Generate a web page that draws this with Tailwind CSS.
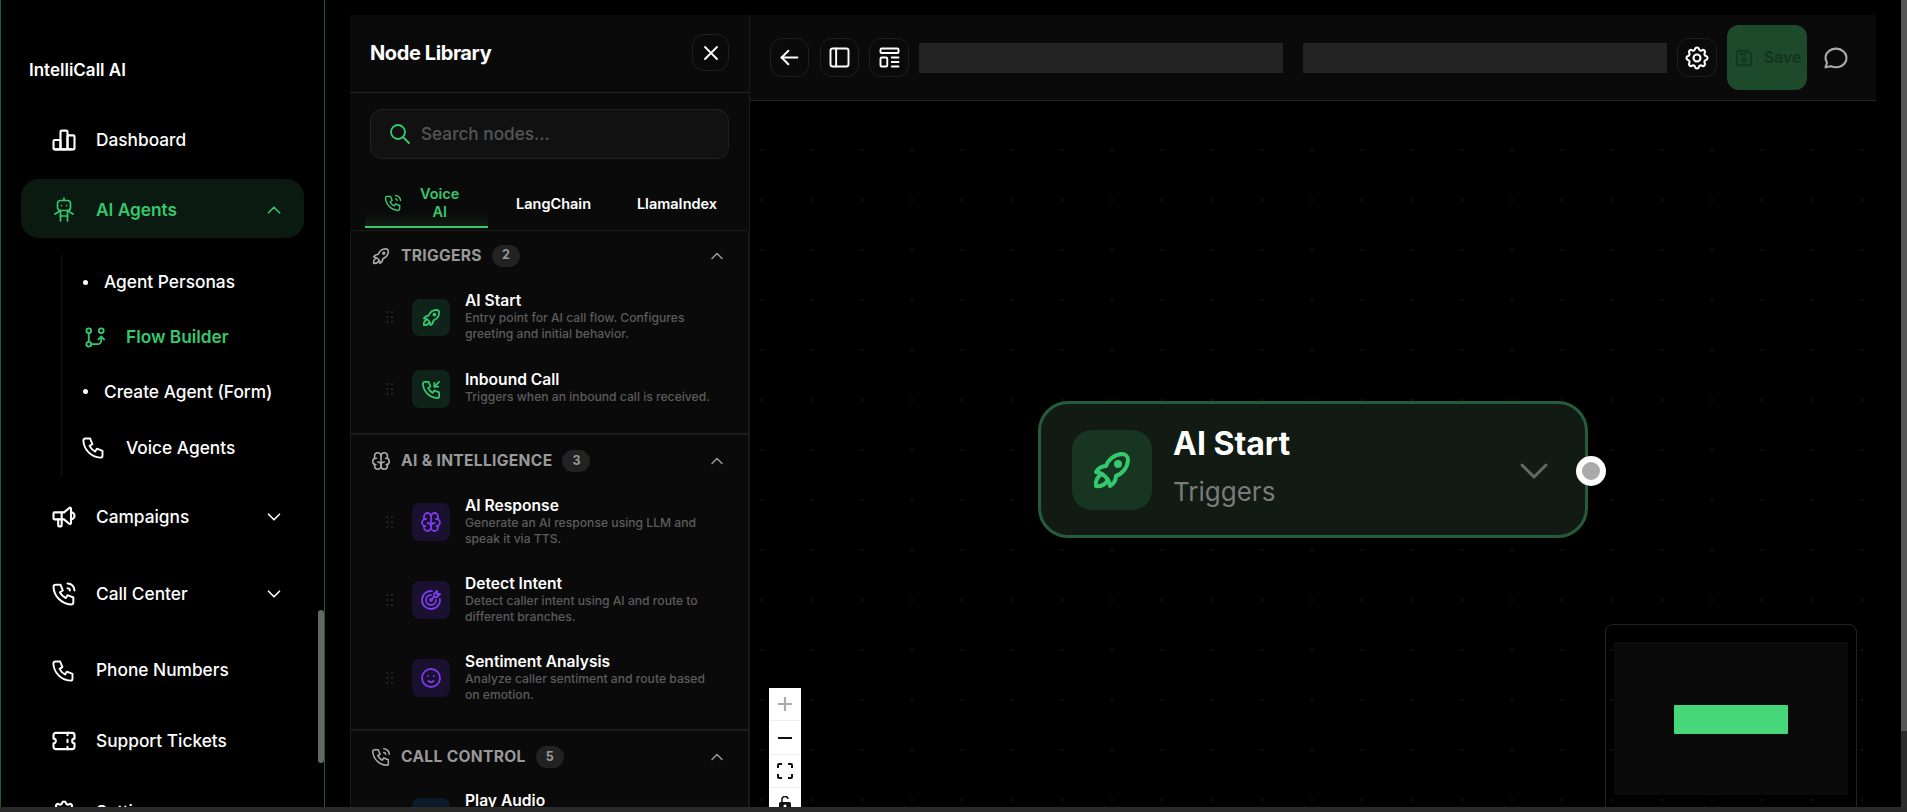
<!DOCTYPE html>
<html><head><meta charset="utf-8"><script src="https://cdn.jsdelivr.net/npm/@tailwindcss/browser@4"></script></head>
<body class="m-0 bg-black overflow-hidden font-['Inter',sans-serif]">
<div class="w-[1907px] h-[812px] flex flex-col overflow-hidden">
 <div class="flex h-[807px] overflow-hidden">
  <!-- sidebar -->
  <aside class="relative w-[325px] shrink-0 h-full bg-black border-x border-[#1f5a33] text-white overflow-hidden">
    <div class="absolute right-0 top-[610px] w-[6px] h-[153px] bg-[#666] rounded-full"></div>
    <div class="pl-[28px] pt-[59px] h-[115px] text-[17px] font-semibold leading-[22px]">IntelliCall AI</div>
    <div class="flex items-center h-[50px] pl-[52px] gap-[21px] text-[17.3px] font-medium">
      <svg class="w-[28px] h-[28px] -mx-[3px]" viewBox="0 0 24 24" fill="none" stroke="currentColor" stroke-width="1.8" stroke-linecap="round" stroke-linejoin="round"><path d="M3 13a1 1 0 0 1 1-1h4a1 1 0 0 1 1 1v6a1 1 0 0 1-1 1H4a1 1 0 0 1-1-1z"/><path d="M15 9a1 1 0 0 1 1-1h4a1 1 0 0 1 1 1v10a1 1 0 0 1-1 1h-4a1 1 0 0 1-1-1z"/><path d="M9 5a1 1 0 0 1 1-1h4a1 1 0 0 1 1 1v14a1 1 0 0 1-1 1h-4a1 1 0 0 1-1-1z"/><path d="M4 20h14"/></svg>
      <span>Dashboard</span></div>
    <div class="mt-[14px] mx-[20px] h-[59px] pt-[2px] rounded-[18px] bg-[#0a1a10] flex items-center pl-[33px] pr-[19px] gap-[22px] text-[17.3px] font-semibold text-[#34c96e]">
      <svg class="w-[20px] h-[25px]" viewBox="0 0 20 25" fill="none" stroke="currentColor" stroke-width="1.7" stroke-linecap="round" stroke-linejoin="round"><path d="M10 1v2.5"/><rect x="3.5" y="3.5" width="13" height="10" rx="3"/><path d="M7.5 8.5v.01M12.5 8.5v.01"/><path d="M1 17l5-3M19 17l-5-3"/><path d="M6.5 13.5V24M13.5 13.5V24"/><path d="M6.5 19h7"/></svg>
      <span class="flex-1">AI Agents</span>
      <svg class="w-[22px] h-[22px]" viewBox="0 0 24 24" fill="none" stroke="currentColor" stroke-width="1.8" stroke-linecap="round" stroke-linejoin="round"><path d="M6 15l6-6 6 6"/></svg></div>
    <div class="ml-[60px] mt-[16px] h-[222px] border-l border-[#111] text-[17.3px] font-medium">
      <div class="flex items-center h-[56px] pl-[21px] gap-[16px]"><span class="w-[5px] h-[5px] rounded-full bg-white"></span><span>Agent Personas</span></div>
      <div class="flex items-center h-[54px] pl-[22px] gap-[19px] text-[#34c96e] font-semibold">
        <svg class="w-[23px] h-[23px]" viewBox="0 0 24 24" fill="none" stroke="currentColor" stroke-width="1.9" stroke-linecap="round" stroke-linejoin="round"><circle cx="18" cy="5" r="2.5"/><circle cx="5" cy="5" r="2.5"/><circle cx="5" cy="19" r="2.5"/><path d="M5 8v8"/><path d="M8 19h6a4 4 0 0 0 4-4v-3"/><path d="m15 14 3-3 3 3"/></svg>
        <span>Flow Builder</span></div>
      <div class="flex items-center h-[55px] pl-[21px] gap-[16px]"><span class="w-[5px] h-[5px] rounded-full bg-white"></span><span>Create Agent (Form)</span></div>
      <div class="flex items-center h-[57px] pl-[18px] gap-[19px]">
        <svg class="w-[27px] h-[27px]" viewBox="0 0 24 24" fill="none" stroke="currentColor" stroke-width="1.7" stroke-linecap="round" stroke-linejoin="round"><path d="M5 4h4l2 5l-2.5 1.5a11 11 0 0 0 5 5l1.5-2.5l5 2v4a2 2 0 0 1-2 2a16 16 0 0 1-15-15a2 2 0 0 1 2-2"/></svg>
        <span>Voice Agents</span></div>
    </div>
    <div class="mt-[16px] flex items-center h-[50px] pl-[52px] pr-[39px] gap-[21px] text-[17.3px] font-medium">
      <svg class="w-[28px] h-[28px] -mx-[3px]" viewBox="0 0 24 24" fill="none" stroke="currentColor" stroke-width="1.8" stroke-linecap="round" stroke-linejoin="round"><path d="M18 8a3 3 0 0 1 0 6"/><path d="M10 8v11a1 1 0 0 1-1 1H8a1 1 0 0 1-1-1v-5"/><path d="M12 8l4.524-3.77a.9.9 0 0 1 1.476.692v12.156a.9.9 0 0 1-1.476.692L12 14H4a1 1 0 0 1-1-1V9a1 1 0 0 1 1-1h8"/></svg>
      <span class="flex-1">Campaigns</span>
      <svg class="w-[22px] h-[22px]" viewBox="0 0 24 24" fill="none" stroke="currentColor" stroke-width="1.8" stroke-linecap="round" stroke-linejoin="round"><path d="M6 9l6 6 6-6"/></svg></div>
    <div class="mt-[27px] flex items-center h-[50px] pl-[52px] pr-[39px] gap-[21px] text-[17.3px] font-medium">
      <svg class="w-[28px] h-[28px] -mx-[3px]" viewBox="0 0 24 24" fill="none" stroke="currentColor" stroke-width="1.7" stroke-linecap="round" stroke-linejoin="round"><path d="M5 4h4l2 5l-2.5 1.5a11 11 0 0 0 5 5l1.5-2.5l5 2v4a2 2 0 0 1-2 2a16 16 0 0 1-15-15a2 2 0 0 1 2-2"/><path d="M15 7a2 2 0 0 1 2 2"/><path d="M15 3a6 6 0 0 1 6 6"/></svg>
      <span class="flex-1">Call Center</span>
      <svg class="w-[22px] h-[22px]" viewBox="0 0 24 24" fill="none" stroke="currentColor" stroke-width="1.8" stroke-linecap="round" stroke-linejoin="round"><path d="M6 9l6 6 6-6"/></svg></div>
    <div class="mt-[26px] flex items-center h-[50px] pl-[52px] gap-[21px] text-[17.3px] font-medium">
      <svg class="w-[27px] h-[27px] -mx-[3px]" viewBox="0 0 24 24" fill="none" stroke="currentColor" stroke-width="1.7" stroke-linecap="round" stroke-linejoin="round"><path d="M5 4h4l2 5l-2.5 1.5a11 11 0 0 0 5 5l1.5-2.5l5 2v4a2 2 0 0 1-2 2a16 16 0 0 1-15-15a2 2 0 0 1 2-2"/></svg>
      <span class="ml-[1px]">Phone Numbers</span></div>
    <div class="mt-[21px] flex items-center h-[50px] pl-[52px] gap-[21px] text-[17.3px] font-medium">
      <svg class="w-[28px] h-[28px] -mx-[3px]" viewBox="0 0 24 24" fill="none" stroke="currentColor" stroke-width="1.8" stroke-linecap="round" stroke-linejoin="round"><path d="M15 5v2M15 11v2M15 17v2"/><path d="M5 5h14a2 2 0 0 1 2 2v3a2 2 0 0 0 0 4v3a2 2 0 0 1-2 2H5a2 2 0 0 1-2-2v-3a2 2 0 0 0 0-4V7a2 2 0 0 1 2-2"/></svg>
      <span>Support Tickets</span></div>
    <div class="mt-[21px] flex items-center h-[50px] pl-[52px] gap-[21px] text-[17.3px] font-medium">
      <svg class="w-[28px] h-[28px] -mx-[3px]" viewBox="0 0 24 24" fill="none" stroke="currentColor" stroke-width="1.8" stroke-linecap="round" stroke-linejoin="round"><path d="M10.325 4.317c.426-1.756 2.924-1.756 3.35 0a1.724 1.724 0 0 0 2.573 1.066c1.543-.94 3.31.826 2.37 2.37a1.724 1.724 0 0 0 1.065 2.572c1.756.426 1.756 2.924 0 3.35a1.724 1.724 0 0 0-1.066 2.573c.94 1.543-.826 3.31-2.37 2.37a1.724 1.724 0 0 0-2.572 1.065c-.426 1.756-2.924 1.756-3.35 0a1.724 1.724 0 0 0-2.573-1.066c-1.543.94-3.31-.826-2.37-2.37a1.724 1.724 0 0 0-1.065-2.572c-1.756-.426-1.756-2.924 0-3.35a1.724 1.724 0 0 0 1.066-2.573c-.94-1.543.826-3.31 2.37-2.37c1 .608 2.296.07 2.572-1.065z"/><path d="M9 12a3 3 0 1 0 6 0a3 3 0 1 0-6 0"/></svg>
      <span>Settings</span></div>
  </aside>
  <div class="w-[25px] shrink-0"></div>
  <!-- library -->
  <section class="mt-[15px] w-[399px] shrink-0 h-[792px] bg-[#0a0a0a] text-white overflow-hidden">
    <div class="h-[78px] border-b border-[#222] flex items-center justify-between pl-[20px] pr-[20px] pb-[2px]">
      <span class="text-[20px] font-bold tracking-[-0.02em]">Node Library</span>
      <div class="w-[37px] h-[37px] rounded-[12px] border border-[#1f1f1f] flex items-center justify-center"><svg class="w-[24px] h-[24px]" viewBox="0 0 24 24" fill="none" stroke="white" stroke-width="1.8" stroke-linecap="round" stroke-linejoin="round"><path d="M18 6 6 18M6 6l12 12"/></svg></div>
    </div>
    <div class="ml-[20px] w-[359px] mt-[16px] h-[50px] rounded-[12px] bg-[#111] border border-[#222] flex items-center pl-[17px] gap-[9px]">
      <svg class="w-[24px] h-[24px]" viewBox="0 0 24 24" fill="none" stroke="#34c96e" stroke-width="1.8" stroke-linecap="round" stroke-linejoin="round"><path d="M3 10a7 7 0 1 0 14 0a7 7 0 1 0-14 0"/><path d="M21 21l-6-6"/></svg>
      <span class="text-[17.2px] font-medium text-[#555]">Search nodes...</span></div>
    <div class="mt-[20px] h-[51px] flex text-[14.5px] font-semibold ml-[15px]">
      <div class="w-[123px] h-[49px] flex items-center pl-[18px] gap-[17px] text-[#34c96e] border-b-[2px] border-[#34c96e] bg-gradient-to-t from-[#34c96e]/10 to-transparent to-30%">
        <svg class="w-[20px] h-[20px] shrink-0" viewBox="0 0 24 24" fill="none" stroke="currentColor" stroke-width="1.7" stroke-linecap="round" stroke-linejoin="round"><path d="M5 4h4l2 5l-2.5 1.5a11 11 0 0 0 5 5l1.5-2.5l5 2v4a2 2 0 0 1-2 2a16 16 0 0 1-15-15a2 2 0 0 1 2-2"/><path d="M15 7a2 2 0 0 1 2 2"/><path d="M15 3a6 6 0 0 1 6 6"/></svg>
        <span class="text-center leading-[18px]">Voice<br>AI</span></div>
      <div class="w-[131px] flex items-center justify-center pb-[2px]">LangChain</div>
      <div class="flex-1 flex items-center justify-center pb-[2px] pr-[14px]">LlamaIndex</div>
    </div>
    <div class="h-[600px] border border-[#1a1a1a] rounded-t-[4px]">
      <!-- triggers -->
      <div class="h-[204px] border-b-[2px] border-[#1c1c1c]">
        <div class="h-[49px] flex items-center pl-[19px] pr-[21px]">
          <svg class="w-[22px] h-[22px] text-[#aaa]" viewBox="0 0 24 24" fill="none" stroke="currentColor" stroke-width="1.7" stroke-linecap="round" stroke-linejoin="round"><path d="M4 13a8 8 0 0 1 7 7a6 6 0 0 0 3-5a9 9 0 0 0 6-8a3 3 0 0 0-3-3a9 9 0 0 0-8 6a6 6 0 0 0-5 3"/><path d="M7 14a6 6 0 0 0-3 6a6 6 0 0 0 6-3"/><path d="M14 9a1 1 0 1 0 2 0a1 1 0 1 0-2 0"/></svg>
          <span class="ml-[9px] text-[15.6px] font-bold text-[#999] tracking-[0.02em]">TRIGGERS</span>
          <span class="ml-[10px] w-[28px] h-[22px] rounded-full bg-[#222] text-[12.5px] font-bold text-[#999] flex items-center justify-center">2</span>
          <svg class="ml-auto w-[20px] h-[20px] text-[#999]" viewBox="0 0 24 24" fill="none" stroke="currentColor" stroke-width="1.8" stroke-linecap="round" stroke-linejoin="round"><path d="M6 15l6-6 6 6"/></svg>
        </div>
        <div class="flex items-center h-[74px] pl-[35px]">
          <svg class="w-[8px] h-[14px] text-[#2c2c2c]" viewBox="0 0 8 14" fill="currentColor"><circle cx="1.5" cy="2" r="1"/><circle cx="6" cy="2" r="1"/><circle cx="1.5" cy="7" r="1"/><circle cx="6" cy="7" r="1"/><circle cx="1.5" cy="12" r="1"/><circle cx="6" cy="12" r="1"/></svg>
          <div class="ml-[18px] mr-[15px] w-[38px] h-[37px] rounded-[8px] bg-[#10231a] flex items-center justify-center"><svg class="w-[23px] h-[23px] text-[#34c96e]" viewBox="0 0 24 24" fill="none" stroke="currentColor" stroke-width="1.8" stroke-linecap="round" stroke-linejoin="round"><path d="M4 13a8 8 0 0 1 7 7a6 6 0 0 0 3-5a9 9 0 0 0 6-8a3 3 0 0 0-3-3a9 9 0 0 0-8 6a6 6 0 0 0-5 3"/><path d="M7 14a6 6 0 0 0-3 6a6 6 0 0 0 6-3"/><path d="M14 9a1 1 0 1 0 2 0a1 1 0 1 0-2 0"/></svg></div>
          <div class="flex-1 -mt-[1px]"><div class="text-[15.6px] font-semibold leading-[19px]">AI Start</div><div class="text-[12.15px] leading-[16px] text-[#5c5c5c] font-medium">Entry point for AI call flow. Configures<br>greeting and initial behavior.</div></div>
        </div>
        <div class="flex items-center h-[70px] pl-[35px]">
          <svg class="w-[8px] h-[14px] text-[#2c2c2c]" viewBox="0 0 8 14" fill="currentColor"><circle cx="1.5" cy="2" r="1"/><circle cx="6" cy="2" r="1"/><circle cx="1.5" cy="7" r="1"/><circle cx="6" cy="7" r="1"/><circle cx="1.5" cy="12" r="1"/><circle cx="6" cy="12" r="1"/></svg>
          <div class="ml-[18px] mr-[15px] w-[38px] h-[38px] rounded-[8px] bg-[#10231a] flex items-center justify-center"><svg class="w-[23px] h-[23px] text-[#34c96e]" viewBox="0 0 24 24" fill="none" stroke="currentColor" stroke-width="1.8" stroke-linecap="round" stroke-linejoin="round"><path d="M5 4h4l2 5l-2.5 1.5a11 11 0 0 0 5 5l1.5-2.5l5 2v4a2 2 0 0 1-2 2a16 16 0 0 1-15-15a2 2 0 0 1 2-2"/><path d="M15 9l5-5"/><path d="M15 5v4h4"/></svg></div>
          <div class="flex-1 -mt-[3px]"><div class="text-[15.6px] font-semibold leading-[19px]">Inbound Call</div><div class="text-[12.15px] leading-[16px] text-[#5c5c5c] font-medium">Triggers when an inbound call is received.</div></div>
        </div>
      </div>
      <!-- ai -->
      <div class="h-[296px] border-b-[2px] border-[#1c1c1c]">
        <div class="h-[48px] pt-[4px] flex items-center pl-[19px] pr-[21px]">
          <svg class="w-[22px] h-[22px] text-[#aaa]" viewBox="0 0 24 24" fill="none" stroke="currentColor" stroke-width="1.7" stroke-linecap="round" stroke-linejoin="round"><path d="M15.5 13a3.5 3.5 0 0 0-3.5 3.5v1a3.5 3.5 0 0 0 7 0v-1.8"/><path d="M8.5 13a3.5 3.5 0 0 1 3.5 3.5v1a3.5 3.5 0 0 1-7 0v-1.8"/><path d="M17.5 16a3.5 3.5 0 0 0 0-7H17"/><path d="M19 9.3V6.5a3.5 3.5 0 0 0-7 0"/><path d="M6.5 16a3.5 3.5 0 0 1 0-7H7"/><path d="M5 9.3V6.5a3.5 3.5 0 0 1 7 0v10"/></svg>
          <span class="ml-[9px] text-[15.6px] font-bold text-[#999] tracking-[0.02em]">AI &amp; INTELLIGENCE</span>
          <span class="ml-[10px] w-[28px] h-[22px] rounded-full bg-[#222] text-[12.5px] font-bold text-[#999] flex items-center justify-center">3</span>
          <svg class="ml-auto w-[20px] h-[20px] text-[#999]" viewBox="0 0 24 24" fill="none" stroke="currentColor" stroke-width="1.8" stroke-linecap="round" stroke-linejoin="round"><path d="M6 15l6-6 6 6"/></svg>
        </div>
        <div class="flex items-center h-[78px] pl-[35px]">
          <svg class="w-[8px] h-[14px] text-[#2c2c2c]" viewBox="0 0 8 14" fill="currentColor"><circle cx="1.5" cy="2" r="1"/><circle cx="6" cy="2" r="1"/><circle cx="1.5" cy="7" r="1"/><circle cx="6" cy="7" r="1"/><circle cx="1.5" cy="12" r="1"/><circle cx="6" cy="12" r="1"/></svg>
          <div class="ml-[18px] mr-[15px] w-[38px] h-[38px] rounded-[8px] bg-[#1a1130] flex items-center justify-center"><svg class="w-[24px] h-[24px] text-[#7c3aed]" viewBox="0 0 24 24" fill="none" stroke="currentColor" stroke-width="1.8" stroke-linecap="round" stroke-linejoin="round"><path d="M15.5 13a3.5 3.5 0 0 0-3.5 3.5v1a3.5 3.5 0 0 0 7 0v-1.8"/><path d="M8.5 13a3.5 3.5 0 0 1 3.5 3.5v1a3.5 3.5 0 0 1-7 0v-1.8"/><path d="M17.5 16a3.5 3.5 0 0 0 0-7H17"/><path d="M19 9.3V6.5a3.5 3.5 0 0 0-7 0"/><path d="M6.5 16a3.5 3.5 0 0 1 0-7H7"/><path d="M5 9.3V6.5a3.5 3.5 0 0 1 7 0v10"/></svg></div>
          <div class="flex-1"><div class="text-[15.6px] font-semibold leading-[18px]">AI Response</div><div class="text-[12.15px] leading-[16px] text-[#5c5c5c] font-medium">Generate an AI response using LLM and<br>speak it via TTS.</div></div>
        </div>
        <div class="flex items-center h-[78px] pl-[35px]">
          <svg class="w-[8px] h-[14px] text-[#2c2c2c]" viewBox="0 0 8 14" fill="currentColor"><circle cx="1.5" cy="2" r="1"/><circle cx="6" cy="2" r="1"/><circle cx="1.5" cy="7" r="1"/><circle cx="6" cy="7" r="1"/><circle cx="1.5" cy="12" r="1"/><circle cx="6" cy="12" r="1"/></svg>
          <div class="ml-[18px] mr-[15px] w-[38px] h-[38px] rounded-[8px] bg-[#1a1130] flex items-center justify-center"><svg class="w-[24px] h-[24px] text-[#7c3aed]" viewBox="0 0 24 24" fill="none" stroke="currentColor" stroke-width="1.8" stroke-linecap="round" stroke-linejoin="round"><path d="M11 12a1 1 0 1 0 2 0a1 1 0 1 0-2 0"/><path d="M12 7a5 5 0 1 0 5 5"/><path d="M13 3.055A9 9 0 1 0 20.941 11"/><path d="M15 6v3h3l3-3h-3V3z"/><path d="M15 9l-3 3"/></svg></div>
          <div class="flex-1"><div class="text-[15.6px] font-semibold leading-[18px]">Detect Intent</div><div class="text-[12.15px] leading-[16px] text-[#5c5c5c] font-medium">Detect caller intent using AI and route to<br>different branches.</div></div>
        </div>
        <div class="flex items-center h-[78px] pl-[35px]">
          <svg class="w-[8px] h-[14px] text-[#2c2c2c]" viewBox="0 0 8 14" fill="currentColor"><circle cx="1.5" cy="2" r="1"/><circle cx="6" cy="2" r="1"/><circle cx="1.5" cy="7" r="1"/><circle cx="6" cy="7" r="1"/><circle cx="1.5" cy="12" r="1"/><circle cx="6" cy="12" r="1"/></svg>
          <div class="ml-[18px] mr-[15px] w-[38px] h-[38px] rounded-[8px] bg-[#1a1130] flex items-center justify-center"><svg class="w-[24px] h-[24px] text-[#7c3aed]" viewBox="0 0 24 24" fill="none" stroke="currentColor" stroke-width="1.8" stroke-linecap="round" stroke-linejoin="round"><circle cx="12" cy="12" r="9"/><path d="M9 10h.01M15 10h.01"/><path d="M9.5 15a3.5 3.5 0 0 0 5 0"/></svg></div>
          <div class="flex-1 -mt-[1px]"><div class="text-[15.6px] font-semibold leading-[18px]">Sentiment Analysis</div><div class="text-[12.15px] leading-[16px] text-[#5c5c5c] font-medium">Analyze caller sentiment and route based<br>on emotion.</div></div>
        </div>
      </div>
      <!-- call control -->
      <div>
        <div class="h-[52px] flex items-center pl-[19px] pr-[21px]">
          <svg class="w-[22px] h-[22px] text-[#aaa]" viewBox="0 0 24 24" fill="none" stroke="currentColor" stroke-width="1.7" stroke-linecap="round" stroke-linejoin="round"><path d="M5 4h4l2 5l-2.5 1.5a11 11 0 0 0 5 5l1.5-2.5l5 2v4a2 2 0 0 1-2 2a16 16 0 0 1-15-15a2 2 0 0 1 2-2"/><path d="M15 7a2 2 0 0 1 2 2"/><path d="M15 3a6 6 0 0 1 6 6"/></svg>
          <span class="ml-[9px] text-[15.6px] font-bold text-[#999] tracking-[0.02em]">CALL CONTROL</span>
          <span class="ml-[10px] w-[28px] h-[22px] rounded-full bg-[#222] text-[12.5px] font-bold text-[#999] flex items-center justify-center">5</span>
          <svg class="ml-auto w-[20px] h-[20px] text-[#999]" viewBox="0 0 24 24" fill="none" stroke="currentColor" stroke-width="1.8" stroke-linecap="round" stroke-linejoin="round"><path d="M6 15l6-6 6 6"/></svg>
        </div>
        <div class="flex items-start pl-[61px] gap-[15px] pt-[9px]">
          <div class="w-[38px] h-[38px] rounded-[8px] bg-[#0d1a2a] mt-[6px]"></div>
          <div class="text-[15.6px] font-semibold leading-[17px]">Play Audio</div>
        </div>
      </div>
    </div>
  </section>
  <!-- main -->
  <main class="mt-[15px] flex-1 min-w-0 border-l border-[#1a1a1a] flex flex-col">
    <div class="h-[86px] mr-[25px] bg-[#0a0a0a] border-b border-[#222] flex items-center pl-[20px] shrink-0 text-white">
      <div class="w-[39px] h-[39px] rounded-[12px] border border-[#1f1f1f] flex items-center justify-center"><svg class="w-[27px] h-[27px]" viewBox="0 0 24 24" fill="none" stroke="currentColor" stroke-width="1.7" stroke-linecap="round" stroke-linejoin="round"><path d="M5 12h14"/><path d="M5 12l6 6"/><path d="M5 12l6-6"/></svg></div>
      <div class="ml-[11px] w-[39px] h-[39px] rounded-[12px] border border-[#1f1f1f] flex items-center justify-center"><svg class="w-[27px] h-[27px]" viewBox="0 0 24 24" fill="none" stroke="currentColor" stroke-width="1.7" stroke-linecap="round" stroke-linejoin="round"><path d="M4 6a2 2 0 0 1 2-2h12a2 2 0 0 1 2 2v12a2 2 0 0 1-2 2H6a2 2 0 0 1-2-2z"/><path d="M9 4v16"/></svg></div>
      <div class="ml-[10px] w-[40px] h-[39px] rounded-[12px] border border-[#1f1f1f] flex items-center justify-center"><svg class="w-[27px] h-[27px]" viewBox="0 0 24 24" fill="none" stroke="currentColor" stroke-width="1.7" stroke-linecap="round" stroke-linejoin="round"><path d="M4 5a1 1 0 0 1 1-1h14a1 1 0 0 1 1 1v2a1 1 0 0 1-1 1H5a1 1 0 0 1-1-1z"/><path d="M4 13a1 1 0 0 1 1-1h4a1 1 0 0 1 1 1v6a1 1 0 0 1-1 1H5a1 1 0 0 1-1-1z"/><path d="M14 12h6M14 16h6M14 20h6"/></svg></div>
      <div class="ml-[10px] w-[364px] h-[30px] bg-[#232323]"></div>
      <div class="ml-[20px] w-[364px] h-[30px] bg-[#232323]"></div>
      <div class="ml-[10px] w-[40px] h-[39px] rounded-[12px] border border-[#1f1f1f] flex items-center justify-center"><svg class="w-[28px] h-[28px] shrink-0" viewBox="0 0 24 24" fill="none" stroke="currentColor" stroke-width="1.8" stroke-linecap="round" stroke-linejoin="round"><path d="M10.325 4.317c.426-1.756 2.924-1.756 3.35 0a1.724 1.724 0 0 0 2.573 1.066c1.543-.94 3.31.826 2.37 2.37a1.724 1.724 0 0 0 1.065 2.572c1.756.426 1.756 2.924 0 3.35a1.724 1.724 0 0 0-1.066 2.573c.94 1.543-.826 3.31-2.37 2.37a1.724 1.724 0 0 0-2.572 1.065c-.426 1.756-2.924 1.756-3.35 0a1.724 1.724 0 0 0-2.573-1.066c-1.543.94-3.31-.826-2.37-2.37a1.724 1.724 0 0 0-1.065-2.572c-1.756-.426-1.756-2.924 0-3.35a1.724 1.724 0 0 0 1.066-2.573c-.94-1.543.826-3.31 2.37-2.37c1 .608 2.296.07 2.572-1.065z"/><path d="M9 12a3 3 0 1 0 6 0a3 3 0 1 0-6 0"/></svg></div>
      <div class="ml-[10px] w-[80px] h-[65px] rounded-[12px] bg-[#1c4a2b] flex items-center justify-center gap-[9px] text-[#14341f]">
        <svg class="w-[22px] h-[22px]" viewBox="0 0 24 24" fill="none" stroke="currentColor" stroke-width="1.8" stroke-linecap="round" stroke-linejoin="round"><path d="M6 4h10l4 4v10a2 2 0 0 1-2 2H6a2 2 0 0 1-2-2V6a2 2 0 0 1 2-2"/><path d="M10 14a2 2 0 1 0 4 0a2 2 0 1 0-4 0"/><path d="M14 4v4H8V4"/></svg>
        <span class="text-[15.6px] font-bold">Save</span></div>
      <svg class="ml-[15px] w-[28px] h-[28px] text-[#aaa]" viewBox="0 0 24 24" fill="none" stroke="currentColor" stroke-width="1.8" stroke-linecap="round" stroke-linejoin="round"><path d="M3 20l1.3-3.9c-2.324-3.437-1.426-7.872 2.1-10.374c3.526-2.501 8.59-2.296 11.845.48c3.255 2.777 3.695 7.266 1.029 10.501c-2.666 3.235-7.615 4.215-11.574 2.293L3 20"/></svg>
    </div>
    <div class="relative flex-1 bg-black bg-[radial-gradient(circle,#141414_1px,transparent_1.3px)] bg-[size:50px_50px] bg-[position:-13px_-26px]">
      <!-- node -->
      <div class="absolute left-[288px] top-[300px] w-[550px] h-[137px] rounded-[30px] border-[3px] border-[#265c3a] bg-[#111a13] flex items-center text-white">
        <div class="ml-[31px] mt-[1px] w-[80px] h-[80px] rounded-[20px] bg-[#183522] flex items-center justify-center"><svg class="w-[48px] h-[48px] text-[#34c96e]" viewBox="0 0 24 24" fill="none" stroke="currentColor" stroke-width="2" stroke-linecap="round" stroke-linejoin="round"><path d="M4 13a8 8 0 0 1 7 7a6 6 0 0 0 3-5a9 9 0 0 0 6-8a3 3 0 0 0-3-3a9 9 0 0 0-8 6a6 6 0 0 0-5 3"/><path d="M7 14a6 6 0 0 0-3 6a6 6 0 0 0 6-3"/><path d="M14 9a1 1 0 1 0 2 0a1 1 0 1 0-2 0"/></svg></div>
        <div class="ml-[21px] flex-1">
          <div class="text-[32px] font-bold leading-[44px]">AI Start</div>
          <div class="text-[26px] leading-[52px] text-[#7a7a7a]">Triggers</div>
        </div>
        <svg class="mr-[33px] mt-[2px] w-[36px] h-[36px] text-[#666]" viewBox="0 0 24 24" fill="none" stroke="currentColor" stroke-width="2" stroke-linecap="round" stroke-linejoin="round"><path d="m4 8 8 8 8-8"/></svg>
        <div class="absolute -right-[21px] top-[52px] w-[30px] h-[30px] rounded-full border-[6px] border-white bg-[#aaa]"></div>
      </div>
      <!-- controls -->
      <div class="absolute left-[19px] top-[587px] w-[32px] bg-white">
        <div class="h-[33px] border-b border-[#eee] flex items-center justify-center"><svg class="w-[16px] h-[16px]" viewBox="0 0 16 16" stroke="#aaa" stroke-width="2"><path d="M8 1v14M1 8h14"/></svg></div>
        <div class="h-[34px] border-b border-[#eee] flex items-center justify-center"><svg class="w-[16px] h-[16px]" viewBox="0 0 16 16" stroke="#111" stroke-width="2"><path d="M1 8h14"/></svg></div>
        <div class="h-[33px] border-b border-[#eee] flex items-center justify-center"><svg class="w-[16px] h-[16px]" viewBox="0 0 16 16" fill="none" stroke="#111" stroke-width="2"><path d="M1 5V2a1 1 0 0 1 1-1h3M11 1h3a1 1 0 0 1 1 1v3M15 11v3a1 1 0 0 1-1 1h-3M5 15H2a1 1 0 0 1-1-1v-3"/></svg></div>
        <div class="h-[20px] flex items-start justify-center pt-[8px] overflow-hidden"><svg class="w-[12px] h-[16px] shrink-0" viewBox="0 0 12 16"><path d="M3 7V4a3 3 0 0 1 6-1" fill="none" stroke="#111" stroke-width="1.5"/><rect x="0" y="6" width="12" height="10" rx="1.5" fill="#111"/><circle cx="6" cy="10" r="1.5" fill="#fff"/></svg></div>
      </div>
      <!-- minimap -->
      <div class="absolute left-[855px] top-[523px] w-[252px] h-[190px] border border-[#222] rounded-t-[8px] pt-[17px] px-[8px]">
        <div class="h-[153px] bg-[#0a0a0a] flex items-center justify-center"><div class="w-[114px] h-[29px] mt-[2px] bg-[#47d77b] rounded-[1px]"></div></div>
      </div>
    </div>
  </main>
  <div class="w-[6px] shrink-0 bg-[#2c2c2c]"><div class="h-[731px] bg-[#555]"></div></div>
 </div>
 <div class="h-[5px] shrink-0 bg-[#2a2a2a]"></div>
</div>
</body></html>
